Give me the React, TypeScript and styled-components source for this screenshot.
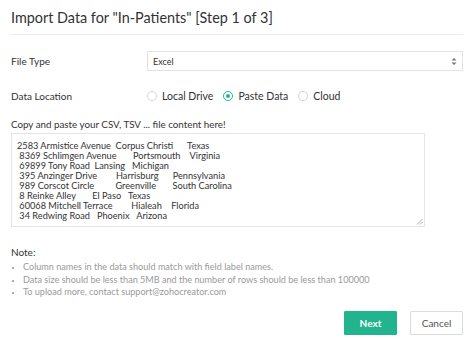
import React from "react";
import styled, { createGlobalStyle } from "styled-components";

const GlobalStyle = createGlobalStyle`
  body {
    margin: 0;
    background: #fff;
    font-family: "Lato", "Open Sans", sans-serif;
    color: #333;
  }
`;

const Dialog = styled("div")`
  width: 474px;
  height: 353px;
  box-sizing: border-box;
  padding: 0 11px;
  display: flex;
  flex-direction: column;
`;

const Header = styled("div")`
  padding-top: 8px;
  padding-bottom: 6px;
  font-size: 14.4px;
  line-height: 20px;
  color: #333;
  border-bottom: 1px solid #ececec;
`;

const Row = styled("div")<{ $top: number }>`
  display: flex;
  align-items: center;
  margin-top: ${(p) => p.$top}px;
  height: 20px;
`;

const Label = styled("div")`
  width: 136px;
  font-size: 10px;
  color: #333;
`;

const Select = styled("div")`
  flex: 1;
  height: 20px;
  box-sizing: border-box;
  border: 1px solid #e2e2e2;
  display: flex;
  align-items: center;
  justify-content: space-between;
  padding: 0 5px;
  font-size: 9px;
  color: #333;
`;

const RadioGroup = styled("div")`
  display: flex;
  align-items: center;
  gap: 10px;
`;

const RadioItem = styled("label")`
  display: flex;
  align-items: center;
  gap: 5px;
  font-size: 10.5px;
  color: #333;
`;

const Circle = styled("span")<{ $on?: boolean }>`
  width: 10px;
  height: 10px;
  box-sizing: border-box;
  border-radius: 50%;
  border: 1px solid ${(p) => (p.$on ? "#22b38f" : "#d4d4d4")};
  display: flex;
  align-items: center;
  justify-content: center;
  &::after {
    content: "";
    width: 4px;
    height: 4px;
    border-radius: 50%;
    background: ${(p) => (p.$on ? "#22b38f" : "transparent")};
  }
`;

const PasteLabel = styled("div")`
  margin-top: 11px;
  font-size: 9.8px;
  line-height: 14px;
  color: #333;
`;

const TextArea = styled("div")`
  position: relative;
  margin-top: 2px;
  width: 414px;
  height: 94px;
  box-sizing: border-box;
  border: 1px solid #e4e4e4;
  padding: 7px 5px;
  font-size: 9.2px;
  line-height: 10px;
  color: #333;
  white-space: pre;
`;

const Grip = styled("svg")`
  position: absolute;
  right: 1px;
  bottom: 1px;
`;

const Note = styled("div")`
  margin-top: 18px;
  font-size: 10px;
  line-height: 14px;
  color: #333;
`;

const Notes = styled("ul")`
  margin: 2px 0 0;
  padding: 0;
  list-style: none;
`;

const NoteItem = styled("li")`
  position: relative;
  padding-left: 12px;
  font-size: 9.1px;
  line-height: 12.6px;
  color: #9a9a9a;
  &::before {
    content: "";
    position: absolute;
    left: 1px;
    top: 6px;
    width: 2px;
    height: 2px;
    background: #aaa;
  }
`;

const Footer = styled("div")`
  margin-top: 12px;
  display: flex;
  justify-content: flex-end;
  gap: 13px;
`;

const Button = styled("button")<{ $primary?: boolean }>`
  width: 53px;
  height: 24px;
  box-sizing: border-box;
  font-family: inherit;
  font-size: 10px;
  font-weight: ${(p) => (p.$primary ? 700 : 400)};
  color: ${(p) => (p.$primary ? "#fff" : "#555")};
  background: ${(p) => (p.$primary ? "#22b38f" : "#fff")};
  border: 1px solid ${(p) => (p.$primary ? "#22b38f" : "#dcdcdc")};
  border-radius: 1px;
  padding: 0;
`;

const rows = [
  "2583 Armistice Avenue  Corpus Christi      Texas",
  " 8369 Schlimgen Avenue       Portsmouth    Virginia",
  " 69899 Tony Road  Lansing   Michigan",
  " 395 Anzinger Drive        Harrisburg      Pennsylvania",
  " 989 Corscot Circle         Greenville       South Carolina",
  " 8 Reinke Alley       El Paso   Texas",
  " 60068 Mitchell Terrace        Hialeah    Florida",
  " 34 Redwing Road   Phoenix   Arizona",
];

export default function App() {
  return (
    <>
      <GlobalStyle />
      <Dialog>
        <Header>Import Data for "In-Patients" [Step 1 of 3]</Header>
        <Row $top={16}>
          <Label>File Type</Label>
          <Select>
            <span>Excel</span>
            <svg width="6" height="9" viewBox="0 0 6 9">
              <path d="M0.5 3.5 L3 1 L5.5 3.5 Z M0.5 5.5 L3 8 L5.5 5.5 Z" fill="#777" />
            </svg>
          </Select>
        </Row>
        <Row $top={15}>
          <Label>Data Location</Label>
          <RadioGroup>
            <RadioItem>
              <Circle />
              Local Drive
            </RadioItem>
            <RadioItem>
              <Circle $on />
              Paste Data
            </RadioItem>
            <RadioItem>
              <Circle />
              Cloud
            </RadioItem>
          </RadioGroup>
        </Row>
        <PasteLabel>Copy and paste your CSV, TSV ... file content here!</PasteLabel>
        <TextArea>
          {rows.join("\n")}
          <Grip width="7" height="7" viewBox="0 0 7 7">
            <path d="M1 6.5 L6.5 1 M4 6.5 L6.5 4" stroke="#999" strokeWidth="0.8" />
          </Grip>
        </TextArea>
        <Note>Note:</Note>
        <Notes>
          <NoteItem>Column names in the data should match with field label names.</NoteItem>
          <NoteItem>
            Data size should be less than 5MB and the number of rows should be less than 100000
          </NoteItem>
          <NoteItem>To upload more, contact support@zohocreator.com</NoteItem>
        </Notes>
        <Footer>
          <Button $primary>Next</Button>
          <Button>Cancel</Button>
        </Footer>
      </Dialog>
    </>
  );
}
